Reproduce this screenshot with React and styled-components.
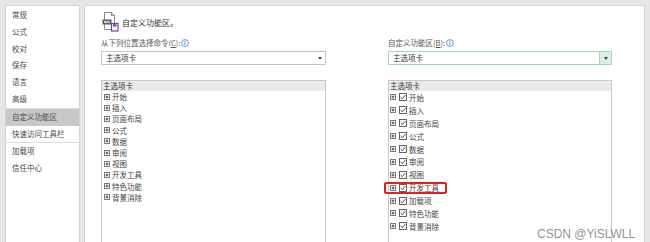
import React from "react";
import styled, { createGlobalStyle } from "styled-components";

const GlobalStyle = createGlobalStyle`
  html, body { margin: 0; padding: 0; }
  body {
    background: #e6e6e6;
    overflow: hidden;
    font-family: "Noto Sans CJK SC", "Noto Sans", sans-serif;
    color: #444;
  }
`;

const Window = styled.div`
  position: relative;
  display: flex;
  gap: 4px;
  padding: 5px 5px 0 5px;
  height: 242px;
  box-sizing: border-box;
  overflow: hidden;
`;

const Sidebar = styled.nav`
  flex: none;
  width: 75px;
  height: 260px;
  box-sizing: border-box;
  background: #fff;
  border: 1px solid #d4d4d4;
  padding-top: 1px;
  display: flex;
  flex-direction: column;
`;

const NavItem = styled.div`
  height: 16.8px;
  line-height: 16.8px;
  padding-left: 6px;
  font-size: 7.5px;
  color: #4a4a4a;
  white-space: nowrap;
  background: ${(p) => (p.$active ? "#c8c8c8" : "transparent")};
`;

const NavSep = styled.div`
  height: 1px;
  background: #dcdcdc;
`;

const Main = styled.main`
  flex: 1;
  height: 260px;
  box-sizing: border-box;
  background: #fff;
  border: 1px solid #d4d4d4;
  padding: 6px 32px 0 16px;
`;

const Heading = styled.div`
  display: flex;
  align-items: center;
  gap: 3px;
  height: 20px;
  padding-left: 1px;
  font-size: 8px;
  color: #333;
`;

const Columns = styled.div`
  display: grid;
  grid-template-columns: 225px 224px;
  column-gap: 62px;
  margin-top: 6px;
`;

const Column = styled.div`
  display: flex;
  flex-direction: column;
`;

const Label = styled.div`
  height: 10px;
  line-height: 10px;
  font-size: 7.5px;
  color: #555;
  display: flex;
  align-items: center;
  white-space: nowrap;
  u { text-decoration: underline; }
`;

const Select = styled.div`
  margin-top: 3px;
  height: 14px;
  box-sizing: border-box;
  border: 1px solid ${(p) => (p.$focused ? "#a4d7b7" : "#c4c4c4")};
  display: flex;
  align-items: stretch;
  justify-content: space-between;
  font-size: 7.5px;
  color: #333;
  background: #fff;
`;

const SelectText = styled.span`
  padding-left: 4px;
  line-height: 12px;
`;

const Arrow = styled.span`
  width: 11px;
  display: flex;
  align-items: center;
  justify-content: center;
  background: ${(p) => (p.$focused ? "#d9f0e2" : "transparent")};
  border-left: 1px solid ${(p) => (p.$focused ? "#a4d7b7" : "transparent")};
  &::after {
    content: "";
    border-left: 2.5px solid transparent;
    border-right: 2.5px solid transparent;
    border-top: 3px solid #444;
  }
`;

const List = styled.div`
  margin-top: 15px;
  height: 180px;
  box-sizing: border-box;
  border: 1px solid #c8c8c8;
  background: #fff;
`;

const ListHeader = styled.div`
  height: 10px;
  line-height: 10px;
  padding-left: 1px;
  background: #ebebeb;
  font-size: 7.5px;
  color: #333;
`;

const Row = styled.div`
  position: relative;
  height: ${(p) => (p.$tall ? "12.9px" : "11.2px")};
  display: flex;
  align-items: center;
  padding-left: ${(p) => (p.$tall ? "1px" : "2px")};
  gap: ${(p) => (p.$tall ? "3px" : "2px")};
  font-size: 7.5px;
  color: #444;
  white-space: nowrap;
`;

const RowText = styled.span`
  margin-left: ${(p) => (p.$tall ? "-1px" : "0")};
`;

const Highlight = styled.span`
  position: absolute;
  left: -5px;
  top: 0.5px;
  width: 63px;
  height: 12.5px;
  box-sizing: border-box;
  border: 2px solid #e3211c;
  border-radius: 2px;
`;

const Watermark = styled.div`
  position: absolute;
  left: 537px;
  top: 228px;
  line-height: 13px;
  font-family: "Liberation Sans", Arial, sans-serif;
  font-size: 12px;
  color: rgba(125, 125, 125, 0.85);
  white-space: nowrap;
`;

const InfoIcon = () => (
  <svg width="8" height="8" viewBox="0 0 8 8" style={{ marginLeft: 1 }}>
    <circle cx="4" cy="4" r="3.4" fill="none" stroke="#3a86d6" strokeWidth="0.8" />
    <circle cx="4" cy="2.4" r="0.55" fill="#3a86d6" />
    <rect x="3.55" y="3.4" width="0.9" height="2.5" fill="#3a86d6" />
  </svg>
);

const ExpandBox = () => (
  <svg width="6" height="6" viewBox="0 0 6 6" style={{ flex: "none" }}>
    <rect x="0.5" y="0.5" width="5" height="5" fill="#fff" stroke="#7a7a7a" strokeWidth="1" />
    <rect x="1.5" y="2.6" width="3" height="0.8" fill="#222" />
    <rect x="2.6" y="1.5" width="0.8" height="3" fill="#222" />
  </svg>
);

const CheckBox = () => (
  <svg width="8" height="8" viewBox="0 0 8 8" style={{ flex: "none" }}>
    <rect x="0.5" y="0.5" width="7" height="7" fill="#fff" stroke="#555" strokeWidth="0.9" />
    <path d="M1.7 4.1 L3.3 5.7 L6.4 2.1" fill="none" stroke="#333" strokeWidth="0.9" />
  </svg>
);

const HeadingIcon = () => (
  <svg width="17" height="20" viewBox="0 0 17 20">
    <path d="M2.5 0.5 H9.5 L12.5 3.5 V17.5 H2.5 Z" fill="#fff" stroke="#8a8a8a" strokeWidth="1" />
    <path d="M9.5 0.5 V3.5 H12.5" fill="none" stroke="#8a8a8a" strokeWidth="1" />
    <rect x="0.5" y="7.5" width="9" height="5" fill="#5c5c5c" />
    <rect x="2" y="9.3" width="6" height="1.4" fill="#e8e8e8" />
    <path d="M2 10 L3.5 8.6 V11.4 Z" fill="#e8e8e8" />
    <rect x="9.5" y="11.5" width="6.5" height="7.5" fill="#fff" stroke="#7b3fa0" strokeWidth="1.2" />
    <rect x="11" y="12.2" width="3.5" height="2.3" fill="#7b3fa0" />
  </svg>
);

const navItems = [
  { t: "常规" },
  { t: "公式" },
  { t: "校对" },
  { t: "保存" },
  { t: "语言" },
  { t: "高级" },
  { sep: true },
  { t: "自定义功能区", active: true },
  { t: "快速访问工具栏" },
  { sep: true },
  { t: "加载项" },
  { t: "信任中心" },
];

const leftItems = ["开始", "插入", "页面布局", "公式", "数据", "审阅", "视图", "开发工具", "特色功能", "背景消除"];
const rightItems = ["开始", "插入", "页面布局", "公式", "数据", "审阅", "视图", "开发工具", "加载项", "特色功能", "背景消除"];

export default function App() {
  return (
    <>
      <GlobalStyle />
      <Window>
        <Sidebar>
          {navItems.map((n, i) =>
            n.sep ? <NavSep key={i} /> : <NavItem key={i} $active={n.active}>{n.t}</NavItem>
          )}
        </Sidebar>
        <Main>
          <Heading>
            <HeadingIcon />
            <span>自定义功能区。</span>
          </Heading>
          <Columns>
            <Column>
              <Label>
                从下列位置选择命令(<u>C</u>):
                <InfoIcon />
              </Label>
              <Select>
                <SelectText>主选项卡</SelectText>
                <Arrow />
              </Select>
              <List>
                <ListHeader>主选项卡</ListHeader>
                {leftItems.map((t) => (
                  <Row key={t}>
                    <ExpandBox />
                    <RowText>{t}</RowText>
                  </Row>
                ))}
              </List>
            </Column>
            <Column>
              <Label>
                自定义功能区(<u>B</u>):
                <InfoIcon />
              </Label>
              <Select $focused>
                <SelectText>主选项卡</SelectText>
                <Arrow $focused />
              </Select>
              <List>
                <ListHeader>主选项卡</ListHeader>
                {rightItems.map((t) => (
                  <Row key={t} $tall>
                    <ExpandBox />
                    <CheckBox />
                    <RowText $tall>{t}</RowText>
                    {t === "开发工具" && <Highlight />}
                  </Row>
                ))}
              </List>
            </Column>
          </Columns>
        </Main>
        <Watermark>CSDN @YiSLWLL</Watermark>
      </Window>
    </>
  );
}
